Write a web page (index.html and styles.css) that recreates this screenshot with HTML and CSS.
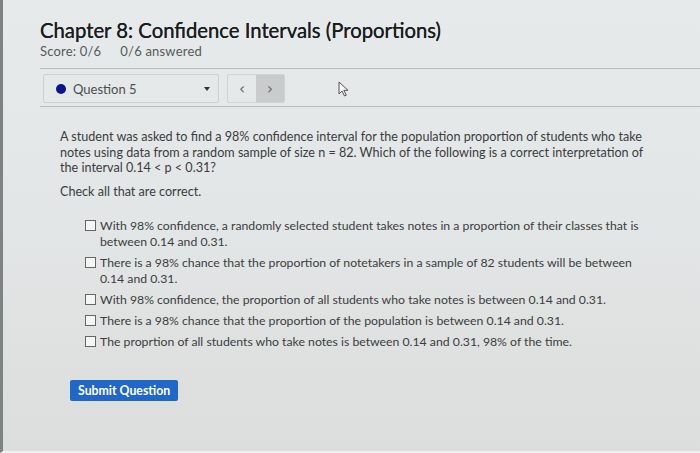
FILE: index.html
```html
<!DOCTYPE html>
<html>
<head>
<meta charset="utf-8">
<link rel="stylesheet" href="styles.css">
</head>
<body>
<div class="screen">
  <header class="head">
    <h1 class="title">Chapter 8: Confidence Intervals (Proportions)</h1>
    <div class="score"><span>Score: 0/6</span><span class="answered">0/6 answered</span></div>
  </header>
  <div class="rule"></div>
  <div class="toolbar">
    <div class="qselect">
      <span class="dot"></span>
      <span class="qlabel">Question 5</span>
      <span class="caret"></span>
    </div>
    <div class="nav">
      <button class="navbtn">&lsaquo;</button>
      <button class="navbtn next">&rsaquo;</button>
    </div>
    <svg class="cursor" width="11" height="16" viewBox="0 0 11 16">
      <path d="M1 1 L1 13 L4 10 L6.5 15 L8.3 14.2 L5.8 9.3 L10 9.3 Z" fill="#f4f4f4" stroke="#555" stroke-width="1"/>
    </svg>
  </div>
  <div class="rule"></div>
  <main class="question">
    <p class="stem">A student was asked to find a 98% confidence interval for the population proportion of students who take notes using data from a random sample of size n = 82. Which of the following is a correct interpretation of the interval 0.14 &lt; p &lt; 0.31?</p>
    <p class="check">Check all that are correct.</p>
    <ul class="options">
      <li class="opt"><span class="box"></span><span class="otext">With 98% confidence, a randomly selected student takes notes in a proportion of their classes that is between 0.14 and 0.31.</span></li>
      <li class="opt"><span class="box"></span><span class="otext">There is a 98% chance that the proportion of notetakers in a sample of 82 students will be between 0.14 and 0.31.</span></li>
      <li class="opt"><span class="box"></span><span class="otext">With 98% confidence, the proportion of all students who take notes is between 0.14 and 0.31.</span></li>
      <li class="opt"><span class="box"></span><span class="otext">There is a 98% chance that the proportion of the population is between 0.14 and 0.31.</span></li>
      <li class="opt"><span class="box"></span><span class="otext">The proprtion of all students who take notes is between 0.14 and 0.31, 98% of the time.</span></li>
    </ul>
    <button class="submit">Submit Question</button>
  </main>
</div>
</body>
</html>
```

FILE: styles.css
```css
html, body {
  margin: 0;
  padding: 0;
}
body {
  width: 700px;
  height: 453px;
  overflow: hidden;
  font-family: Lato, "Open Sans", sans-serif;
  color: #3a3d3d;
}
.screen {
  box-sizing: border-box;
  width: 700px;
  height: 453px;
  border-left: 3px solid #7d8282;
  border-bottom: 2px solid #f0f0f0;
  background: linear-gradient(180deg, #e7eaea 0%, #e3e6e6 50%, #dcdddd 100%);
  padding-left: 37px;
  overflow: hidden;
}
.head {
  padding-top: 17px;
}
.title {
  margin: 0;
  font-size: 20.3px;
  line-height: 26px;
  font-weight: 400;
  color: #1a1d1d;
  text-shadow: 0 0 0.4px #1a1d1d;
}
.score {
  margin-top: 0;
  font-size: 13px;
  letter-spacing: 0.2px;
  line-height: 16px;
  color: #555a5a;
  display: flex;
  gap: 19px;
}
.rule {
  height: 1px;
  background: #b9bebe;
  margin-top: 9px;
}
.toolbar {
  display: flex;
  align-items: center;
  height: 29px;
  padding: 5px 0 0 3px;
  gap: 8px;
  position: relative;
}
.qselect {
  box-sizing: border-box;
  width: 176px;
  height: 29px;
  border: 1px solid #cdd1d1;
  border-radius: 2px;
  display: flex;
  align-items: center;
  padding-left: 12px;
  padding-right: 8px;
}
.dot {
  width: 10px;
  height: 10px;
  border-radius: 50%;
  background: #10128e;
  margin-right: 7px;
}
.qlabel {
  font-size: 13px;
  color: #4a4f4f;
  flex: 1;
}
.caret {
  width: 0;
  height: 0;
  border-left: 3px solid transparent;
  border-right: 3px solid transparent;
  border-top: 4px solid #333;
}
.nav {
  display: flex;
  height: 29px;
  border: 1px solid #cfd3d3;
  border-radius: 2px;
  box-sizing: border-box;
}
.navbtn {
  width: 28px;
  height: 27px;
  border: 0;
  padding: 0;
  background: transparent;
  font-family: "DejaVu Sans", sans-serif;
  font-size: 15px;
  color: #666;
}
.navbtn.next {
  background: #c9cccc;
}
.cursor {
  position: absolute;
  left: 298px;
  top: 12px;
}
.toolbar + .rule {
  margin-top: 3px;
}
.question {
  padding-left: 20px;
  padding-right: 40px;
}
.stem {
  margin: 22px 0 0 0;
  font-size: 12.6px;
  line-height: 15.5px;
  color: #3a3d3d;
}
.check {
  margin: 8px 0 0 0;
  font-size: 12.6px;
  line-height: 15.5px;
}
.options {
  list-style: none;
  margin: 19px 0 0 0;
  padding: 0 12px 0 25px;
}
.opt {
  display: flex;
  align-items: flex-start;
  font-size: 12.25px;
  line-height: 16px;
  margin-bottom: 5px;
}
.opt:nth-child(n+4) {
  margin-top: 1px;
}
.box {
  flex: none;
  box-sizing: border-box;
  width: 11px;
  height: 11px;
  border: 1px solid #666;
  background: #f4f5f5;
  margin-top: 2px;
  margin-right: 4px;
}
.otext {
  flex: 1;
}
.submit {
  margin: 25px 0 0 10px;
  background: #1f67c9;
  color: #fff;
  border: 0;
  border-radius: 2px;
  font-family: Lato, sans-serif;
  font-weight: 700;
  font-size: 12.3px;
  height: 21px;
  padding: 0 8px;
}
```
